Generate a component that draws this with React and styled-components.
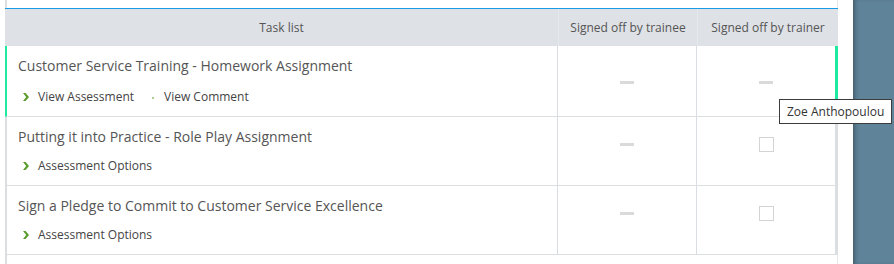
import React from 'react';
import styled, { createGlobalStyle } from 'styled-components';

const GlobalStyle = createGlobalStyle`
  html, body {
    margin: 0;
    padding: 0;
    background: #fff;
  }
  body {
    font-family: "Open Sans", "Liberation Sans", Arial, sans-serif;
  }
`;

const Page = styled.div`
  display: flex;
  height: 264px;
  overflow: hidden;
`;

const Main = styled.div`
  width: 853px;
  padding-left: 5px;
  box-sizing: border-box;
`;

const Side = styled.div`
  flex: 1;
  background: #5f8399;
  box-shadow: inset 4px 0 4px -2px rgba(0, 0, 0, 0.3);
`;

const Panel = styled.div`
  width: 833px;
  height: 100%;
  padding-top: 8px;
  box-sizing: border-box;
  background:
    linear-gradient(#dcdfe2, #dcdfe2) left top / 2px 100% no-repeat,
    linear-gradient(#e6e8ea, #e6e8ea) right top / 1px 100% no-repeat;
`;

const Header = styled.div`
  display: grid;
  grid-template-columns: 553px 139px 141px;
  height: 37px;
  border-top: 1px solid #1a9be6;
  background: #dee1e5;
  color: #555;
  font-size: 12px;
`;

const HeadCell = styled.div`
  display: flex;
  align-items: center;
  justify-content: center;
  padding-bottom: 1px;
  border-left: ${p => (p.first ? 'none' : '1px solid #e6e9ec')};
`;

const Row = styled.div`
  display: grid;
  grid-template-columns: 551px 139px 138px;
  background: #fff;
  border-left: 2px solid ${p => (p.active ? '#1ee9a0' : '#dcdfe2')};
  border-right: 3px solid ${p => (p.active ? '#1ee9a0' : '#dcdfe2')};
  border-bottom: 1px solid #dcdfe2;
`;

const TaskCell = styled.div`
  padding: 10px 11px;
  border-right: 1px solid #d9dde1;
  display: flex;
  flex-direction: column;
  gap: ${p => p.gap}px;
`;

const Title = styled.div`
  font-size: 14px;
  line-height: 20px;
  color: #555;
`;

const Links = styled.div`
  display: flex;
  align-items: center;
  padding-left: 5px;
  font-size: 12px;
  line-height: 18px;
  color: #444;
`;

const Link = styled.span`
  display: flex;
  align-items: center;
  gap: 9px;
`;

const Dot = styled.span`
  width: 2px;
  height: 2px;
  border-radius: 50%;
  background: #8cc06e;
  margin: 2px 10px 0 18px;
`;

const SignCell = styled.div`
  position: relative;
  display: flex;
  justify-content: center;
  padding-top: ${p => p.top}px;
  border-right: ${p => (p.last ? 'none' : '1px solid #d9dde1')};
`;

const Mark = styled.div`
  width: 15px;
  height: 15px;
  display: flex;
  align-items: center;
  justify-content: center;
`;

const Dash = styled.span`
  width: 14px;
  height: 3px;
  background: #dadada;
`;

const Check = styled.span`
  width: 15px;
  height: 15px;
  border: 1px solid #d4d4d4;
  box-sizing: border-box;
`;

const Tooltip = styled.div`
  position: absolute;
  left: 82px;
  top: 53px;
  height: 25px;
  box-sizing: border-box;
  padding: 0 7px;
  border: 1px solid #3c3c3c;
  background: #fff;
  color: #333;
  font-size: 12px;
  line-height: 23px;
  white-space: nowrap;
  z-index: 2;
`;

const Chevron = () => (
  <svg width="6" height="8" viewBox="0 0 6 8">
    <path d="M0 0H2.6L6 4L2.6 8H0L3.2 4Z" fill="#5a9d2c" />
  </svg>
);

const tasks = [
  {
    title: 'Customer Service Training - Homework Assignment',
    links: ['View Assessment', 'View Comment'],
    trainer: 'dash',
    active: true,
    gap: 12,
    top: 29,
    tooltip: 'Zoe Anthopoulou'
  },
  {
    title: 'Putting it into Practice - Role Play Assignment',
    links: ['Assessment Options'],
    trainer: 'check',
    gap: 10,
    top: 20
  },
  {
    title: 'Sign a Pledge to Commit to Customer Service Excellence',
    links: ['Assessment Options'],
    trainer: 'check',
    gap: 10,
    top: 20
  }
];

export default function App() {
  return (
    <>
      <GlobalStyle />
      <Page>
        <Main>
          <Panel>
            <Header>
              <HeadCell first>Task list</HeadCell>
              <HeadCell>Signed off by trainee</HeadCell>
              <HeadCell>Signed off by trainer</HeadCell>
            </Header>
            {tasks.map(task => (
              <Row key={task.title} active={task.active}>
                <TaskCell gap={task.gap}>
                  <Title>{task.title}</Title>
                  <Links>
                    <Link>
                      <Chevron />
                      {task.links[0]}
                    </Link>
                    {task.links[1] && (
                      <>
                        <Dot />
                        <Link>{task.links[1]}</Link>
                      </>
                    )}
                  </Links>
                </TaskCell>
                <SignCell top={task.top}>
                  <Mark>
                    <Dash />
                  </Mark>
                </SignCell>
                <SignCell top={task.top} last>
                  <Mark>{task.trainer === 'dash' ? <Dash /> : <Check />}</Mark>
                  {task.tooltip && <Tooltip>{task.tooltip}</Tooltip>}
                </SignCell>
              </Row>
            ))}
          </Panel>
        </Main>
        <Side />
      </Page>
    </>
  );
}
